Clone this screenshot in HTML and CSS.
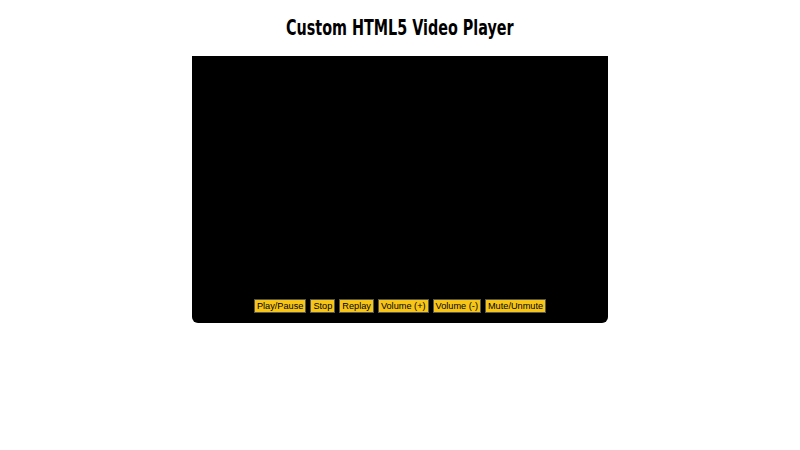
FILE: index.html
```html
<!DOCTYPE html>
<html lang="en">
<head>
  <meta charset="UTF-8" />
  <meta name="viewport" content="width=device-width, initial-scale=1" />
  <title>Custom HTML5 Video Player</title>
  <link rel="stylesheet" href="styles.css">
</head>
<body>

<h1 class="title"><span>Custom HTML5 Video Player</span></h1>

<div class="player">
  <video class="screen" id="video"></video>

  <div class="controls">
    <button type="button" class="ctrl">Play/Pause</button>
    <button type="button" class="ctrl">Stop</button>
    <button type="button" class="ctrl">Replay</button>
    <button type="button" class="ctrl">Volume (+)</button>
    <button type="button" class="ctrl">Volume (-)</button>
    <button type="button" class="ctrl">Mute/Unmute</button>
  </div>
</div>

</body>
</html>
```

FILE: styles.css
```css
* {
  box-sizing: border-box;
}

body {
  margin: 0;
  background-color: #fff;
  font-family: 'Liberation Sans', Arial, sans-serif;
}

.title {
  margin: 14px 0 13px;
  font-family: 'DejaVu Sans Condensed', 'DejaVu Sans', sans-serif;
  font-size: 21px;
  font-weight: bold;
  line-height: 29px;
  text-align: center;
  color: #000;
}

/* squeeze the heading into a tall, narrow look */
.title span {
  display: inline-block;
  transform: scaleX(0.76);
}

.player {
  width: 416px;
  margin: 0 auto;
  background-color: #000;
  border-radius: 6px;
  padding-bottom: 10px;
}

.player .screen {
  display: block;
  width: 100%;
  height: 243px;
  background-color: #000;
}

.controls {
  display: flex;
  justify-content: center;
  gap: 4px;
}

.ctrl {
  height: 14px;
  margin: 0;
  padding: 0 2px;
  font-family: 'Liberation Sans', Arial, sans-serif;
  font-size: 9.2px;
  line-height: 12px;
  color: #000;
  background-color: #f7c518;
  border: 1px solid #555;
  border-radius: 0;
  cursor: pointer;
}
```
